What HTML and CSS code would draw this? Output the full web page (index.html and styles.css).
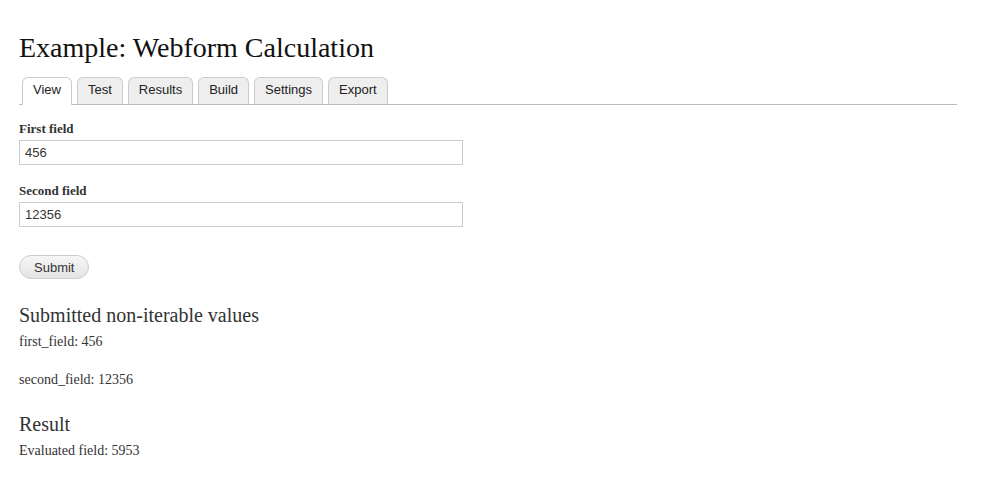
FILE: index.html
```html
<!DOCTYPE html>
<html lang="en">
<head>
<meta charset="UTF-8" />
<title>Example: Webform Calculation</title>
<link rel="stylesheet" href="styles.css">
</head>
<body>
  <main class="page">
    <h1 class="page-title">Example: Webform Calculation</h1>
    <nav class="tabs">
      <a class="tab active" href="#">View</a>
      <a class="tab" href="#">Test</a>
      <a class="tab" href="#">Results</a>
      <a class="tab" href="#">Build</a>
      <a class="tab" href="#">Settings</a>
      <a class="tab" href="#">Export</a>
    </nav>

    <form class="webform">
      <div class="form-item">
        <label for="first_field">First field</label>
        <input type="text" id="first_field" value="456" />
      </div>
      <div class="form-item">
        <label for="second_field">Second field</label>
        <input type="text" id="second_field" value="12356" />
      </div>
      <div class="actions">
        <button type="submit" class="button">Submit</button>
      </div>
    </form>

    <h2 class="section-title">Submitted non-iterable values</h2>
    <p class="value">first_field: 456</p>
    <p class="value">second_field: 12356</p>

    <h2 class="section-title result">Result</h2>
    <p class="value">Evaluated field: 5953</p>
  </main>
</body>
</html>
```

FILE: styles.css
```css
body {
  margin: 0;
  font-family: "Liberation Serif", "Times New Roman", serif;
  font-size: 14px;
  color: #333;
  background: #fff;
}
.page {
  padding: 0 49px 0 19px;
}
.page-title {
  margin: 0;
  padding-top: 31px;
  font-size: 28px;
  font-weight: normal;
  line-height: 34px;
  color: #111;
}
.tabs {
  display: flex;
  gap: 5px;
  margin-top: 12px;
  padding-left: 3px;
  border-bottom: 1px solid #bbb;
}
.tab {
  display: block;
  padding: 3px 10px 6px;
  font-family: "Liberation Sans", Arial, sans-serif;
  font-size: 13px;
  line-height: 17px;
  color: #222;
  text-decoration: none;
  background: #eee;
  border: 1px solid #ccc;
  border-bottom: none;
  border-radius: 6px 6px 0 0;
}
.tab.active {
  background: #fff;
  border-color: #ccc;
  margin-bottom: -1px;
  padding-bottom: 7px;
}
.webform {
  margin-top: 16px;
}
.form-item {
  margin-bottom: 18px;
}
.form-item label {
  display: block;
  font-weight: bold;
  font-size: 13px;
  line-height: 16px;
  margin-bottom: 3px;
}
.form-item input {
  display: block;
  box-sizing: border-box;
  width: 444px;
  height: 25px;
  padding: 2px 5px;
  border: 1px solid #ccc;
  font-family: "Liberation Sans", Arial, sans-serif;
  font-size: 13px;
  color: #333;
}
.actions {
  margin-top: 28px;
}
.button {
  box-sizing: border-box;
  height: 24px;
  padding: 0 14px;
  font-family: "Liberation Sans", Arial, sans-serif;
  font-size: 13px;
  color: #333;
  background: linear-gradient(#f6f6f6, #e4e4e4);
  border: 1px solid #ccc;
  border-radius: 12px;
  cursor: pointer;
}
.section-title {
  margin: 24px 0 0;
  font-size: 20px;
  font-weight: normal;
  line-height: 24px;
}
.section-title.result {
  margin-top: 23px;
}
.value {
  margin: 6px 0 20px;
  line-height: 18px;
}
```
